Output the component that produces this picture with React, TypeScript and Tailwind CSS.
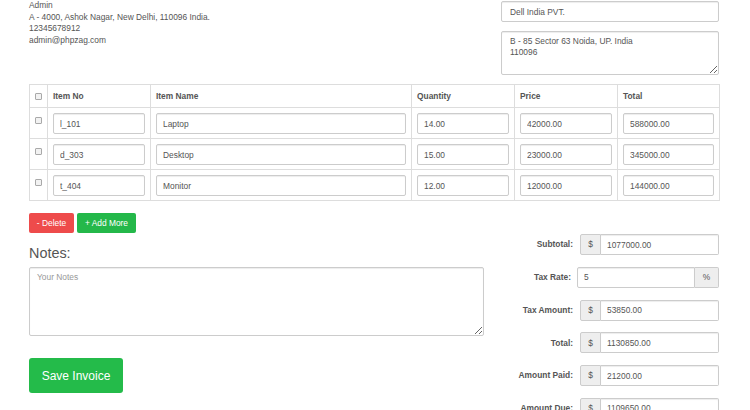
import React from 'react'

const rows = [
    { no: 'l_101', name: 'Laptop', qty: '14.00', price: '42000.00', total: '588000.00' },
    { no: 'd_303', name: 'Desktop', qty: '15.00', price: '23000.00', total: '345000.00' },
    { no: 't_404', name: 'Monitor', qty: '12.00', price: '12000.00', total: '144000.00' },
]

const totals = [
    { label: 'Subtotal:', value: '1077000.00' },
    { label: 'Tax Rate:', value: '5', percent: true },
    { label: 'Tax Amount:', value: '53850.00' },
    { label: 'Total:', value: '1130850.00' },
    { label: 'Amount Paid:', value: '21200.00' },
    { label: 'Amount Due:', value: '1109650.00' },
]

const inputCls = "block w-full h-[21px] border border-[#ccc] rounded-[2px] px-[6px] text-[8.4px] text-[#555] bg-white outline-none shadow-[inset_0_1px_1px_rgba(0,0,0,0.075)] font-['Liberation_Sans',Arial,sans-serif]"

const Check = () => (
    <span className="block mx-auto w-[7px] h-[7px] border border-[#a9a9a9] rounded-[1px] bg-[#f2f2f2]"></span>
)

const App = () => {
    return (
        <div className="w-[750px] h-[410px] overflow-hidden bg-white pl-[29px] pr-[31px] text-[#555] leading-none font-['Liberation_Sans',Arial,sans-serif]">

            {/* top: company + customer */}
            <div className="flex justify-between">
                <div className="text-[8.4px] leading-[11.6px]">
                    <div>Admin</div>
                    <div>A - 4000, Ashok Nagar, New Delhi, 110096 India.</div>
                    <div>12345678912</div>
                    <div>admin@phpzag.com</div>
                </div>
                <div className="w-[218px] pt-[1px]">
                    <input className={inputCls + " px-[8px]"} defaultValue="Dell India PVT." />
                    <textarea
                        className={inputCls + " h-[44px] mt-[9px] pt-[4px] px-[8px] leading-[11px] resize-y"}
                        defaultValue={"B - 85 Sector 63 Noida, UP. India\n110096"}
                    />
                </div>
            </div>

            {/* items */}
            <table className="w-[690px] mt-[9px] table-fixed border-collapse border border-[#ddd] text-[8.4px]">
                <colgroup>
                    <col className="w-[18px]" />
                    <col className="w-[103px]" />
                    <col className="w-[261px]" />
                    <col className="w-[103px]" />
                    <col className="w-[103px]" />
                    <col className="w-[102px]" />
                </colgroup>
                <thead>
                    <tr className="h-[23px]">
                        <th className="border border-[#ddd] p-0"><Check /></th>
                        <th className="border border-[#ddd] px-[5px] text-left font-bold">Item No</th>
                        <th className="border border-[#ddd] px-[5px] text-left font-bold">Item Name</th>
                        <th className="border border-[#ddd] px-[5px] text-left font-bold">Quantity</th>
                        <th className="border border-[#ddd] px-[5px] text-left font-bold">Price</th>
                        <th className="border border-[#ddd] px-[5px] text-left font-bold">Total</th>
                    </tr>
                </thead>
                <tbody>
                    {rows.map((r) => (
                        <tr key={r.no}>
                            <td className="border border-[#ddd] pt-[9px] align-top"><Check /></td>
                            <td className="border border-[#ddd] px-[5px] pt-[5px] pb-[4px]"><input className={inputCls} defaultValue={r.no} /></td>
                            <td className="border border-[#ddd] px-[5px] pt-[5px] pb-[4px]"><input className={inputCls} defaultValue={r.name} /></td>
                            <td className="border border-[#ddd] px-[5px] pt-[5px] pb-[4px]"><input className={inputCls} defaultValue={r.qty} /></td>
                            <td className="border border-[#ddd] px-[5px] pt-[5px] pb-[4px]"><input className={inputCls} defaultValue={r.price} /></td>
                            <td className="border border-[#ddd] px-[5px] pt-[5px] pb-[4px]"><input className={inputCls} defaultValue={r.total} /></td>
                        </tr>
                    ))}
                </tbody>
            </table>

            <div className="flex gap-[3px] mt-[12px]">
                <button className="w-[45px] h-[20px] rounded-[2px] bg-[#ee4b4b] text-white text-[8.4px]">- Delete</button>
                <button className="w-[59px] h-[20px] rounded-[2px] bg-[#24b84a] text-white text-[8.4px]">+ Add More</button>
            </div>

            {/* notes + totals */}
            <div className="flex">
                <div className="w-[455px]">
                    <h3 className="mt-[12px] text-[14.4px] leading-[16px]">Notes:</h3>
                    <textarea
                        className={inputCls + " h-[69px] mt-[6px] pt-[5px] px-[7px] resize-y placeholder:text-[#999]"}
                        placeholder="Your Notes"
                    />
                    <button className="block mt-[22px] w-[94px] h-[35px] rounded-[3px] bg-[#24bb4a] text-white text-[12px]">Save Invoice</button>
                </div>

                <div className="flex-1 pt-[1px] flex flex-col gap-[11.8px]">
                    {totals.map((t) => (
                        <div key={t.label} className="flex items-center justify-end">
                            <span className={"text-[8.4px] font-bold " + (t.percent ? "mr-[6px]" : "mr-[7px]")}>{t.label}</span>
                            {t.percent ? (
                                <div className="flex w-[142px] h-[21px]">
                                    <input className={inputCls + " flex-1 min-w-0 rounded-r-none"} defaultValue={t.value} />
                                    <span className="w-[24px] h-[21px] border border-l-0 border-[#ccc] bg-[#eee] rounded-r-[2px] flex items-center justify-center text-[8.4px]">%</span>
                                </div>
                            ) : (
                                <div className="flex w-[139px] h-[21px]">
                                    <span className="w-[21px] h-[21px] border border-[#ccc] bg-[#eee] rounded-l-[2px] flex items-center justify-center text-[8.4px]">$</span>
                                    <input className={inputCls + " flex-1 min-w-0 border-l-0 rounded-l-none"} defaultValue={t.value} />
                                </div>
                            )}
                        </div>
                    ))}
                </div>
            </div>

        </div>
    )
}

export default App
